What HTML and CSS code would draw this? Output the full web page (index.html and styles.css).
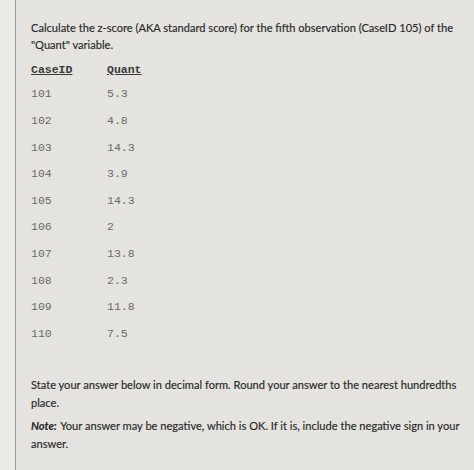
FILE: index.html
```html
<!DOCTYPE html>
<html>
<head>
<meta charset="utf-8">
<link rel="stylesheet" href="styles.css">
</head>
<body>
<div class="page">
  <div class="gutter"></div>
  <div class="content">
    <p class="q">Calculate the z-score (AKA standard score) for the fifth observation (CaseID 105) of the "Quant" variable.</p>
    <div class="data">
      <div class="row head"><span>CaseID</span><span>Quant</span></div>
      <div class="row"><span>101</span><span>5.3</span></div>
      <div class="row"><span>102</span><span>4.8</span></div>
      <div class="row"><span>103</span><span>14.3</span></div>
      <div class="row"><span>104</span><span>3.9</span></div>
      <div class="row"><span>105</span><span>14.3</span></div>
      <div class="row"><span>106</span><span>2</span></div>
      <div class="row"><span>107</span><span>13.8</span></div>
      <div class="row"><span>108</span><span>2.3</span></div>
      <div class="row"><span>109</span><span>11.8</span></div>
      <div class="row"><span>110</span><span>7.5</span></div>
    </div>
    <p class="a">State your answer below in decimal form. Round your answer to the nearest hundredths place.</p>
    <p class="a"><em>Note:</em> Your answer may be negative, which is OK. If it is, include the negative sign in your answer.</p>
  </div>
</div>
</body>
</html>
```
FILE: styles.css
```css
html, body {
  margin: 0;
  padding: 0;
  background: #e4e3df;
}
.page {
  display: flex;
  width: 474px;
  height: 470px;
  overflow: hidden;
}
.gutter {
  width: 15px;
  flex: none;
  background: #ebeae6;
  border-right: 1.5px solid #9d9d9a;
}
.content {
  flex: 1;
  padding: 19px 12px 0 15px;
  font-family: Lato, "Open Sans", sans-serif;
  font-size: 11.1px;
  line-height: 17px;
  color: #2a2a28;
  -webkit-text-stroke: 0.15px #2a2a28;
}
.q {
  margin: 0 0 10px 0;
}
.data {
  display: flex;
  flex-direction: column;
  font-family: "Liberation Mono", "DejaVu Sans Mono", monospace;
  font-size: 11.5px;
  -webkit-text-stroke: 0;
  margin-bottom: 28.5px;
}
.row {
  display: grid;
  grid-template-columns: 76px auto;
  line-height: 26.6px;
  color: #6a6a67;
}
.row.head {
  line-height: 14px;
  height: 18.4px;
  font-weight: bold;
  text-decoration: underline;
  color: #3a3a38;
}
.a {
  margin: 0 0 5px 0;
  line-height: 18px;
}
.a em {
  font-style: italic;
  font-weight: bold;
  margin-right: 1px;
}
```
